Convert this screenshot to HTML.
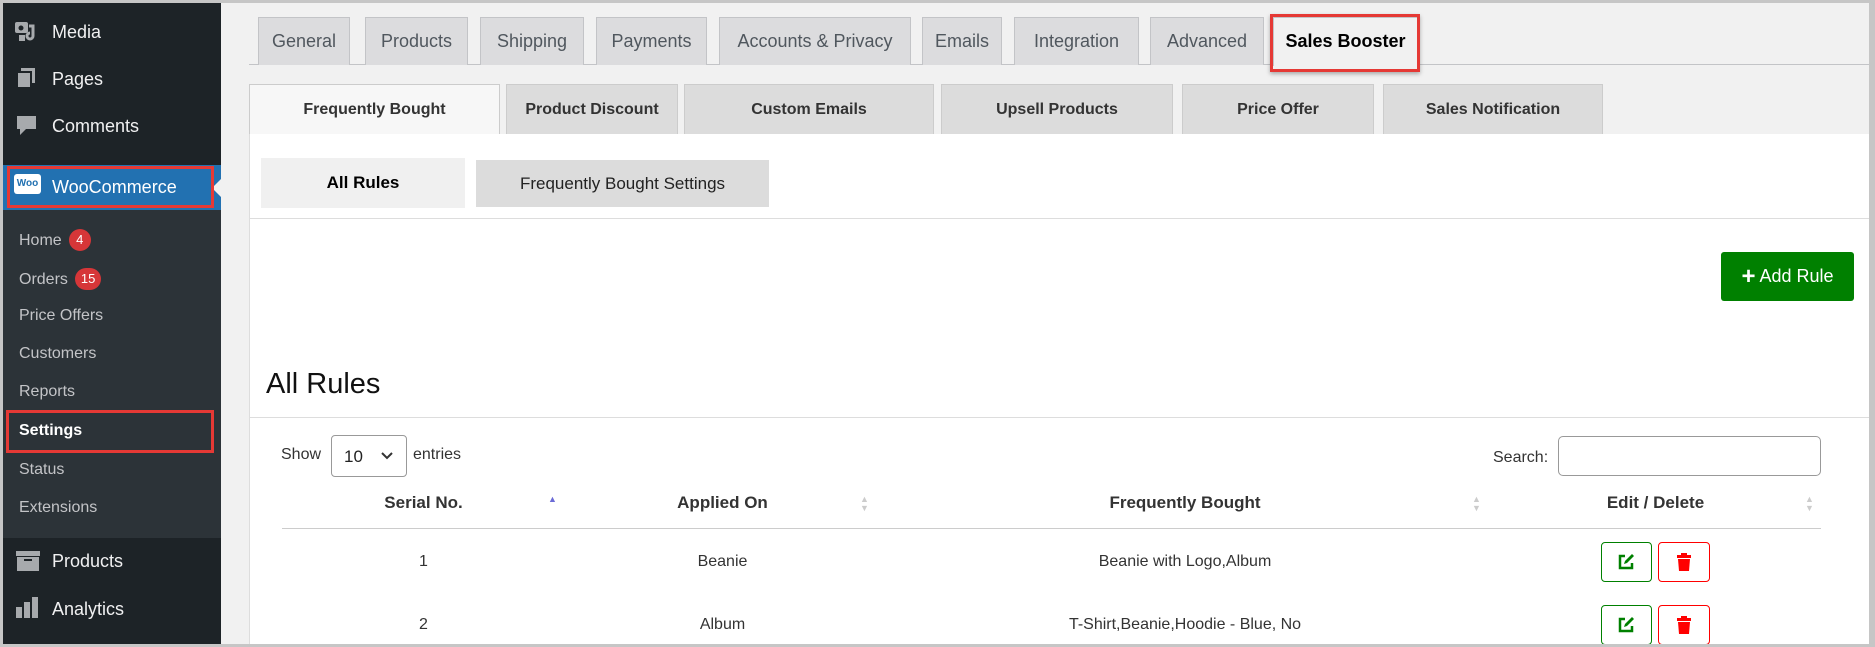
<!DOCTYPE html>
<html><head><meta charset="utf-8"><style>
*{box-sizing:border-box;margin:0;padding:0}
body{width:1875px;height:647px;overflow:hidden;background:#c6c6c6;font-family:"Liberation Sans",Arial,sans-serif;position:relative}
.a{position:absolute}
#frame{left:3px;top:3px;width:1866px;height:641px;background:#f1f1f1;overflow:hidden}
.sb{left:3px;top:3px;width:218px;height:641px;background:#1d2327}
.mi{position:absolute;left:52px;color:#f0f0f1;font-size:18px;line-height:22px}
.ic{position:absolute;left:14px;width:24px;height:22px}
.sub{position:absolute;left:19px;color:#c3c4c7;font-size:16px;line-height:20px}
.badge{display:inline-block;background:#d63638;color:#fff;border-radius:11px;font-size:13px;line-height:22px;height:22px;min-width:22px;text-align:center;padding:0 6px;margin-left:7px;vertical-align:1px}
.tab{position:absolute;top:17px;height:48px;background:#dcdcde;border:1px solid #c3c4c7;border-bottom:none;color:#50575e;font-size:18px;line-height:47px;text-align:center}
.st{position:absolute;top:84px;height:50px;background:#dcdcdc;border:1px solid #ccc;border-bottom:none;color:#333;font-size:16px;font-weight:bold;line-height:50px;text-align:center}
.th{position:absolute;top:493px;font-size:17px;font-weight:bold;color:#333;text-align:center}
.td{position:absolute;font-size:16px;color:#333;text-align:center}
.arr{position:absolute;top:495px;width:8px;color:#ccc;font-size:9px;line-height:9px}
.eb{position:absolute;width:51px;height:40px;border:1px solid #008000;border-radius:4px;background:#fff}
.db{position:absolute;width:52px;height:40px;border:1px solid #f00;border-radius:4px;background:#fff}
</style></head><body>
<div class="a" id="frame"></div>
<div class="a sb">
</div>
<!-- sidebar items (absolute to body) -->
<svg class="a" style="left:14px;top:20px" width="26" height="24" viewBox="0 0 26 24"><rect x="1" y="2" width="13" height="11" rx="2" fill="#a7aaad"/><circle cx="7" cy="8" r="2.5" fill="#1d2327"/><path d="M15 6h4v10a3 3 0 1 1-3-3" stroke="#a7aaad" stroke-width="3" fill="none"/><rect x="5" y="15" width="6" height="6" fill="#a7aaad"/></svg>
<div class="mi" style="top:21px">Media</div>
<svg class="a" style="left:15px;top:66px" width="24" height="24"><rect x="6" y="2" width="14" height="15" fill="#a7aaad"/><rect x="2" y="6" width="14" height="16" fill="#a7aaad" stroke="#1d2327" stroke-width="2"/></svg>
<div class="mi" style="top:68px">Pages</div>
<svg class="a" style="left:15px;top:113px" width="24" height="26"><path d="M2 3h19v13h-10l-6 6v-6h-3z" fill="#a7aaad"/></svg>
<div class="mi" style="top:115px">Comments</div>
<div class="a" style="left:3px;top:165px;width:218px;height:45px;background:#2271b1"></div>
<div class="a" style="left:221px;top:179px;width:0;height:0;border-top:9px solid transparent;border-bottom:9px solid transparent;border-right:9px solid #f1f1f1;margin-left:-9px"></div>
<div class="a" style="left:7px;top:166px;width:207px;height:42px;border:3px solid #e53935"></div>
<div class="a" style="left:14px;top:174px;width:27px;height:20px;background:#fff;border-radius:3px;color:#2271b1;font-size:10px;font-weight:bold;line-height:20px;text-align:center">Woo</div>
<div class="mi" style="top:176px;color:#fff">WooCommerce</div>
<div class="a" style="left:3px;top:210px;width:218px;height:328px;background:#2c3338"></div>
<div class="sub" style="top:229px">Home<span class="badge">4</span></div>
<div class="sub" style="top:268px">Orders<span class="badge">15</span></div>
<div class="sub" style="top:306px">Price Offers</div>
<div class="sub" style="top:344px">Customers</div>
<div class="sub" style="top:382px">Reports</div>
<div class="a" style="left:6px;top:410px;width:208px;height:43px;border:3px solid #e53935"></div>
<div class="sub" style="top:421px;color:#fff;font-weight:bold">Settings</div>
<div class="sub" style="top:460px">Status</div>
<div class="sub" style="top:498px">Extensions</div>
<svg class="a" style="left:15px;top:550px" width="26" height="22"><rect x="1" y="1" width="24" height="5" fill="#a7aaad"/><rect x="2" y="7" width="22" height="14" fill="#a7aaad"/><rect x="9" y="9" width="8" height="2" fill="#1d2327"/></svg>
<div class="mi" style="top:550px">Products</div>
<svg class="a" style="left:15px;top:596px" width="26" height="24"><rect x="1" y="11" width="6" height="11" fill="#a7aaad"/><rect x="9" y="6" width="6" height="16" fill="#a7aaad"/><rect x="17" y="1" width="6" height="21" fill="#a7aaad"/></svg>
<div class="mi" style="top:598px">Analytics</div>

<!-- top tabs -->
<div class="a" style="left:249px;top:64px;width:1620px;height:1px;background:#c3c4c7"></div>
<div class="tab" style="left:258px;width:92px">General</div>
<div class="tab" style="left:365px;width:103px">Products</div>
<div class="tab" style="left:480px;width:104px">Shipping</div>
<div class="tab" style="left:596px;width:111px">Payments</div>
<div class="tab" style="left:719px;width:192px">Accounts &amp; Privacy</div>
<div class="tab" style="left:922px;width:80px">Emails</div>
<div class="tab" style="left:1014px;width:125px">Integration</div>
<div class="tab" style="left:1150px;width:114px">Advanced</div>
<div class="tab" style="left:1273px;width:145px;background:#f1f1f1;color:#000;font-weight:bold;height:49px">Sales Booster</div>
<div class="a" style="left:1270px;top:14px;width:150px;height:58px;border:3px solid #e53935;box-shadow:0 2px 4px rgba(0,0,0,.3)"></div>

<!-- sub tabs -->
<div class="a" style="left:249px;top:134px;width:1620px;height:513px;background:#fff;border-left:1px solid #ddd"></div>
<div class="st" style="left:249px;width:251px;background:#f7f7f7">Frequently Bought</div>
<div class="st" style="left:506px;width:172px">Product Discount</div>
<div class="st" style="left:684px;width:250px">Custom Emails</div>
<div class="st" style="left:941px;width:232px">Upsell Products</div>
<div class="st" style="left:1182px;width:192px">Price Offer</div>
<div class="st" style="left:1383px;width:220px">Sales Notification</div>

<div class="a" style="left:261px;top:158px;width:204px;height:50px;background:#f0f0f0;font-size:17px;font-weight:bold;color:#000;text-align:center;line-height:50px">All Rules</div>
<div class="a" style="left:476px;top:160px;width:293px;height:47px;background:#dcdcdc;font-size:17px;color:#222;text-align:center;line-height:47px">Frequently Bought Settings</div>
<div class="a" style="left:249px;top:218px;width:1620px;height:1px;background:#ddd"></div>

<div class="a" style="left:1721px;top:252px;width:133px;height:49px;background:#008000;border-radius:3px;color:#fff;font-size:18px;line-height:49px;text-align:center"><b style="font-size:24px;vertical-align:-2px">+</b> Add Rule</div>

<div class="a" style="left:266px;top:368px;font-size:29px;color:#111">All Rules</div>
<div class="a" style="left:249px;top:417px;width:1620px;height:1px;background:#ddd"></div>

<div class="a" style="left:281px;top:446px;font-size:16px;color:#333">Show</div>
<div class="a" style="left:331px;top:435px;width:76px;height:42px;border:1px solid #999;border-radius:4px;font-size:17px;color:#222;padding:11px 0 0 12px">10</div>
<svg class="a" style="left:380px;top:451px" width="14" height="10"><path d="M2 2l5 5 5-5" stroke="#333" stroke-width="2" fill="none"/></svg>
<div class="a" style="left:413px;top:446px;font-size:16px;color:#333">entries</div>
<div class="a" style="left:1493px;top:449px;font-size:16px;color:#333">Search:</div>
<div class="a" style="left:1558px;top:436px;width:263px;height:40px;border:1px solid #999;border-radius:5px"></div>

<div class="th" style="left:282px;width:283px">Serial No.</div>
<div class="th" style="left:565px;width:315px">Applied On</div>
<div class="th" style="left:880px;width:610px">Frequently Bought</div>
<div class="th" style="left:1490px;width:331px">Edit / Delete</div>
<div class="arr" style="left:548px;color:#6b6bd6">▲</div>
<div class="arr" style="left:860px">▲<br>▼</div>
<div class="arr" style="left:1472px">▲<br>▼</div>
<div class="arr" style="left:1805px">▲<br>▼</div>
<div class="a" style="left:282px;top:528px;width:1539px;height:1px;background:#ccc"></div>

<div class="td" style="left:282px;width:283px;top:553px">1</div>
<div class="td" style="left:565px;width:315px;top:553px">Beanie</div>
<div class="td" style="left:880px;width:610px;top:553px">Beanie with Logo,Album</div>
<div class="td" style="left:282px;width:283px;top:616px">2</div>
<div class="td" style="left:565px;width:315px;top:616px">Album</div>
<div class="td" style="left:880px;width:610px;top:616px">T-Shirt,Beanie,Hoodie - Blue, No</div>

<div class="eb" style="left:1601px;top:542px"></div>
<div class="db" style="left:1658px;top:542px"></div>
<div class="eb" style="left:1601px;top:605px"></div>
<div class="db" style="left:1658px;top:605px"></div>
<svg class="a" style="left:1617px;top:553px" width="18" height="18"><path d="M8 3H3v12h12v-5" stroke="#008000" stroke-width="2.5" fill="none"/><path d="M7 11l1-3 7-7 2 2-7 7z" fill="#008000"/></svg>
<svg class="a" style="left:1675px;top:553px" width="18" height="18"><rect x="2" y="2" width="14" height="3" fill="#f00"/><rect x="6" y="0" width="6" height="3" fill="#f00"/><path d="M3 6h12l-1 12H4z" fill="#f00"/></svg>
<svg class="a" style="left:1617px;top:616px" width="18" height="18"><path d="M8 3H3v12h12v-5" stroke="#008000" stroke-width="2.5" fill="none"/><path d="M7 11l1-3 7-7 2 2-7 7z" fill="#008000"/></svg>
<svg class="a" style="left:1675px;top:616px" width="18" height="18"><rect x="2" y="2" width="14" height="3" fill="#f00"/><rect x="6" y="0" width="6" height="3" fill="#f00"/><path d="M3 6h12l-1 12H4z" fill="#f00"/></svg>
<div class="a" style="left:0;top:644px;width:1875px;height:3px;background:#c6c6c6"></div>
<div class="a" style="left:1869px;top:0;width:6px;height:647px;background:#c6c6c6"></div>
<div class="a" style="left:0;top:0;width:1875px;height:3px;background:#c6c6c6"></div>
</body></html>
